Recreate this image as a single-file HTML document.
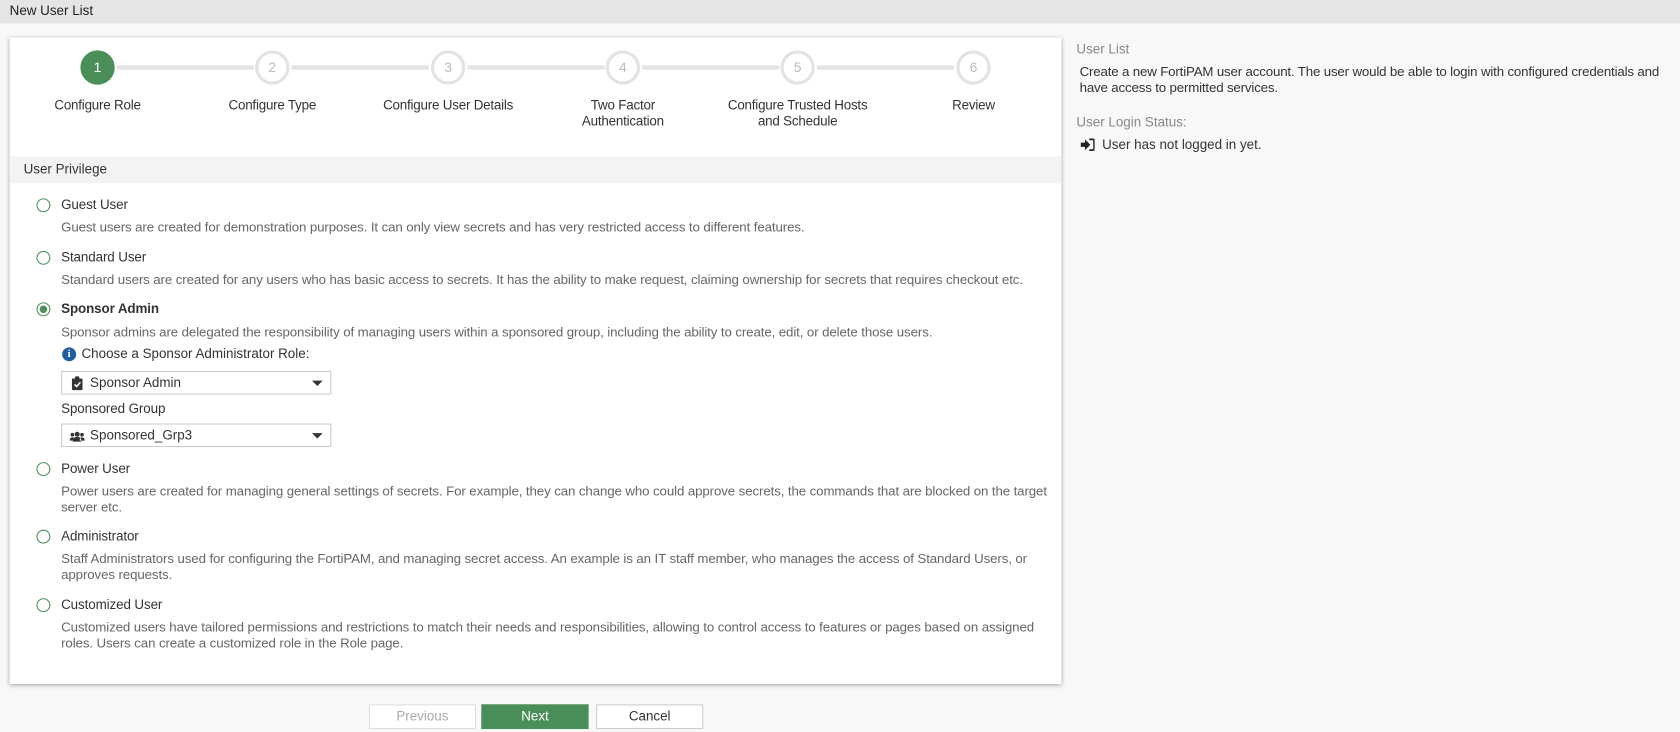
<!DOCTYPE html>
<html><head><style>
*{box-sizing:border-box;margin:0;padding:0}
body{width:1680px;height:732px;background:#f8f8f8;font-family:"Liberation Sans",sans-serif;overflow:hidden}
#w{position:absolute;left:0;top:0;width:1567px;height:683px;transform:scale(1.0721);transform-origin:0 0;font-size:13px;color:#333}
.hdr{position:absolute;left:0;top:0;width:1567px;height:22px;background:#e5e5e5;padding:3px 9px;font-size:12.5px;color:#222}
.card{position:absolute;left:9px;top:35px;width:981px;height:603px;background:#fff;box-shadow:0 1px 4px rgba(0,0,0,.35)}
.a{position:absolute;white-space:nowrap}
.c{position:absolute;width:32px;height:32px;border-radius:50%;border:3px solid #e3e3e3;color:#bbb;text-align:center;line-height:26px;font-size:13px;background:#fff}
.c.on{background:#4a8f5a;border-color:#4a8f5a;color:#fff}
.ln{position:absolute;height:4px;background:#e3e3e3;top:61px}
.lbl{position:absolute;width:180px;text-align:center;top:91px;line-height:15px;font-size:12.5px;color:#333;letter-spacing:-.2px}
.bar{position:absolute;left:9px;top:146px;width:981px;height:25px;background:#f3f3f3;padding:5px 13px;color:#333;font-size:12.5px}
.r{position:absolute;left:34px;width:13px;height:13px;border:1px solid #4a8f5a;border-radius:50%;background:#fff}
.r.on::after{content:"";position:absolute;left:2px;top:2px;width:7px;height:7px;border-radius:50%;background:#4a8f5a}
.t{position:absolute;left:57px;color:#333;font-size:12.5px;letter-spacing:-.1px}
.d{position:absolute;left:57px;color:#666;line-height:15px;font-size:12.4px;letter-spacing:-.1px;white-space:nowrap}
.sel{position:absolute;left:57px;width:252px;height:22px;border:1px solid #ccc;background:#fff;padding:3px 8px 0 26px;font-size:12.5px}
.sel::after{content:"";position:absolute;right:7px;top:8px;border:5px solid transparent;border-top:5px solid #333;border-bottom:0}
.btn{position:absolute;top:657px;height:23px;width:100px;text-align:center;line-height:21px;border:1px solid #ccc;background:#fff;font-size:12.5px}
</style></head><body><div id="w">
<div class="hdr">New User List</div>
<div class="card"></div>
<div class="ln" style="left:109px;width:128px"></div>
<div class="ln" style="left:272px;width:128px"></div>
<div class="ln" style="left:436px;width:128px"></div>
<div class="ln" style="left:599px;width:128px"></div>
<div class="ln" style="left:762px;width:128px"></div>
<div class="c on" style="left:75px;top:47px">1</div>
<div class="c" style="left:238px;top:47px">2</div>
<div class="c" style="left:402px;top:47px">3</div>
<div class="c" style="left:565px;top:47px">4</div>
<div class="c" style="left:728px;top:47px">5</div>
<div class="c" style="left:892px;top:47px">6</div>
<div class="lbl" style="left:1px">Configure Role</div>
<div class="lbl" style="left:164px">Configure Type</div>
<div class="lbl" style="left:328px">Configure User Details</div>
<div class="lbl" style="left:491px">Two Factor<br>Authentication</div>
<div class="lbl" style="left:654px">Configure Trusted Hosts<br>and Schedule</div>
<div class="lbl" style="left:818px">Review</div>
<div class="bar">User Privilege</div>

<div class="r" style="top:185px"></div><div class="t" style="top:184px">Guest User</div>
<div class="d" style="top:205px">Guest users are created for demonstration purposes. It can only view secrets and has very restricted access to different features.</div>
<div class="r" style="top:234px"></div><div class="t" style="top:233px">Standard User</div>
<div class="d" style="top:254px">Standard users are created for any users who has basic access to secrets. It has the ability to make request, claiming ownership for secrets that requires checkout etc.</div>
<div class="r on" style="top:282px"></div><div class="t" style="top:281px;font-weight:bold">Sponsor Admin</div>
<div class="d" style="top:303px">Sponsor admins are delegated the responsibility of managing users within a sponsored group, including the ability to create, edit, or delete those users.</div>
<div class="a" style="left:58px;top:324px;width:13px;height:13px;border-radius:50%;background:#1f5f9f;color:#fff;font-size:10px;font-weight:bold;text-align:center;line-height:13px;font-family:'Liberation Serif',serif">i</div>
<div class="a" style="left:76px;top:323px;font-size:12.5px">Choose a Sponsor Administrator Role:</div>
<div class="sel" style="top:346px"><svg style="position:absolute;left:9px;top:4px" width="10" height="13" viewBox="0 0 10 13"><rect x="0" y="2" width="10" height="11" rx="1" fill="#333"/><rect x="3" y="0" width="4" height="3" rx="1" fill="#333"/><path d="M2.5 7.5l2 2 3.5-4" stroke="#fff" stroke-width="1.4" fill="none"/></svg>Sponsor Admin</div>
<div class="t" style="top:374px">Sponsored Group</div>
<div class="sel" style="top:395px"><svg style="position:absolute;left:7px;top:6px" width="14" height="10" viewBox="0 0 14 10"><circle cx="7" cy="3" r="2.3" fill="#333"/><circle cx="2.5" cy="3.5" r="1.7" fill="#333"/><circle cx="11.5" cy="3.5" r="1.7" fill="#333"/><path d="M3 10c0-3 1.5-4.5 4-4.5s4 1.5 4 4.5z M0 9c0-2 1-3 2.5-3s2 .5 2 1v2z M14 9c0-2-1-3-2.5-3s-2 .5-2 1v2z" fill="#333"/></svg>Sponsored_Grp3</div>
<div class="r" style="top:431px"></div><div class="t" style="top:430px">Power User</div>
<div class="d" style="top:451px">Power users are created for managing general settings of secrets. For example, they can change who could approve secrets, the commands that are blocked on the target<br>server etc.</div>
<div class="r" style="top:494px"></div><div class="t" style="top:493px">Administrator</div>
<div class="d" style="top:514px">Staff Administrators used for configuring the FortiPAM, and managing secret access. An example is an IT staff member, who manages the access of Standard Users, or<br>approves requests.</div>
<div class="r" style="top:558px"></div><div class="t" style="top:557px">Customized User</div>
<div class="d" style="top:578px">Customized users have tailored permissions and restrictions to match their needs and responsibilities, allowing to control access to features or pages based on assigned<br>roles. Users can create a customized role in the Role page.</div>

<div class="btn" style="left:344px;color:#aaa;border-color:#ddd">Previous</div>
<div class="btn" style="left:449px;background:#4a8f5a;border-color:#4a8f5a;color:#fff">Next</div>
<div class="btn" style="left:556px">Cancel</div>

<div class="a" style="left:1004px;top:39px;color:#888;font-size:12.5px">User List</div>
<div class="a" style="left:1007px;top:60px;line-height:15px;font-size:12.4px;letter-spacing:-.15px">Create a new FortiPAM user account. The user would be able to login with configured credentials and<br>have access to permitted services.</div>
<div class="a" style="left:1004px;top:107px;color:#888;font-size:12.5px">User Login Status:</div>
<svg class="a" style="left:1008px;top:129px" width="13" height="12" viewBox="0 0 13 12"><path d="M0 4h4V1l5 5-5 5V8H0z" fill="#222"/><path d="M8 1h3.5a1 1 0 0 1 1 1v8a1 1 0 0 1-1 1H8" stroke="#222" stroke-width="1.6" fill="none"/></svg>
<div class="a" style="left:1028px;top:128px;font-size:12.5px">User has not logged in yet.</div>
</div></body></html>
